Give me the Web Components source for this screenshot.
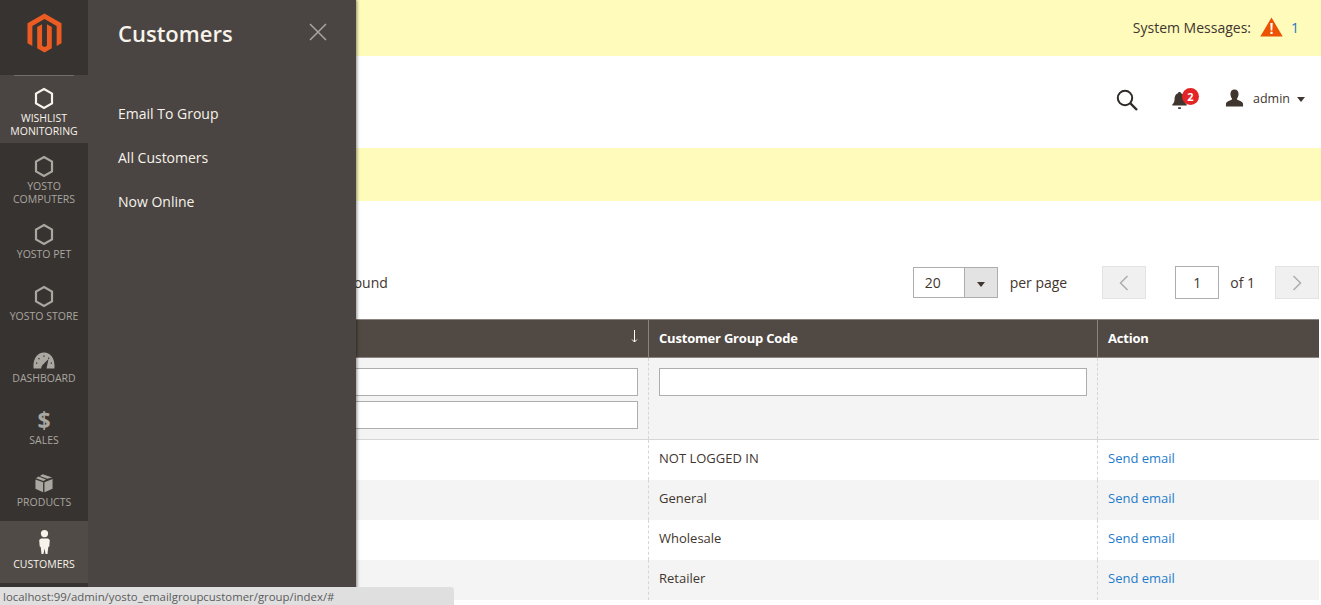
<!DOCTYPE html>
<html>
<head>
<meta charset="utf-8">
<title>Customer Groups</title>
<style>
html, body { margin: 0; padding: 0; height: 100%; overflow: hidden; background: #fff; }
body { font-family: "Open Sans", "Noto Sans", sans-serif; font-size: 14px; color: #41362f; }
</style>
</head>
<body>
<admin-app></admin-app>

<script>
const HEX = `<svg width="20" height="23" viewBox="0 0 20 23"><path d="M10 2 18 6.600V16.400L10 21 2 16.400V6.600Z" fill="none" stroke="currentColor" stroke-width="2.200"/></svg>`;
const ICONS = {
    hex: HEX,
    dashboard: `<svg style="margin-top:3px" width="22" height="17" viewBox="0 0 22 17"><path fill="currentColor" d="M.6 16.500C-.3 7 4 .5 11 .5s11.300 6.500 10.400 16H13.500L15.500 7 9.500 13C8.700 14 8 15.300 8.300 16.500Z"/><path fill="#373330" d="M3 10.500h1.300v1.300H3zM5.300 6h1.300v1.300H5.300zM10.300 3.500h1.300v1.300h-1.300zM15 5.500h1.300v1.300H15zM17.700 10.500H19v1.300h-1.300z"/></svg>`,
    dollar: `<span style="font:700 23px/25px 'Open Sans',sans-serif">$</span>`,
    box: `<svg width="18" height="20" viewBox="0 0 20 22"><path fill="currentColor" d="M9.300 8.800 1 5.600 4 3.900l8.300 3.200zM13.700 6.400 5.400 3.200 8.500 1.400l10.600 3.500zM.5 7l8.500 3.200v11L.5 17.500zM19.500 6.500v11L10.500 21.300v-11z"/></svg>`,
    person: `<svg style="margin-bottom:6px" width="11" height="24" viewBox="0 0 11 24"><circle cx="5.500" cy="3.600" r="3.600" fill="currentColor"/><path fill="currentColor" d="M2 8.500H9L10.800 10 10.300 16.500 9.300 17 8.500 24H6.500L5.500 18.500 4.500 24H2.500L1.700 17 .7 16.500 .2 10Z"/></svg>`
};

class AdminLogo extends HTMLElement {
    constructor() {
        super();
        this.attachShadow({ mode: 'open' });
        this.shadowRoot.innerHTML = `
            <style>
                :host { display: flex; height: 75px; justify-content: center; padding-top: 13px; box-sizing: border-box; position: relative; }
                :host::after { content: ""; position: absolute; left: 14px; right: 14px; bottom: -1px; height: 1px; background: #736e6a; }
                svg { display: block; margin-left: 1px; }
            </style>
            <svg width="35" height="40" viewBox="0 0 36 41">
                <path fill="#ec5c22" d="M18 .5 35.500 10.500V31l-5 2.900V13.400L18 6.200 5.500 13.400V33.900L.5 31V10.500Z"/>
                <path fill="#ec5c22" d="M15.500 11.500V33.500L18 35 20.500 33.500V11.500L25.500 14.200V36.300L18 40.500 10.500 36.300V14.200Z"/>
            </svg>`;
    }
}

class NavItem extends HTMLElement {
    constructor() {
        super();
        this.attachShadow({ mode: 'open' });
    }

    connectedCallback() {
        const icon = ICONS[this.getAttribute('icon')] || HEX;
        this.shadowRoot.innerHTML = `
            <style>
                :host { display: flex; flex-direction: column; align-items: center; box-sizing: border-box; height: 62px; padding-top: 11px; color: #aaa6a0; }
                :host([active]) { background: #504b47; color: #f7f3eb; }
                :host([first]) { background: #4a4542; }
                :host([wide]) { height: 68px; }
                .icon { height: 25px; display: flex; align-items: center; justify-content: center; margin-bottom: 1px; }
                svg { display: block; }
                .label { font-size: 10.500px; line-height: 13px; text-align: center; text-transform: uppercase; white-space: pre-line; }
            </style>
            <div class="icon">${icon}</div>
            <div class="label"><slot></slot></div>`;
    }
}

class AdminSidebar extends HTMLElement {
    constructor() {
        super();
        this.attachShadow({ mode: 'open' });
        this.shadowRoot.innerHTML = `
            <style>
                :host { display: block; position: absolute; left: 0; top: 0; bottom: 0; width: 88px; background: #373330; z-index: 3; }
            </style>
            <slot></slot>`;
    }
}

class FlyoutPanel extends HTMLElement {
    constructor() {
        super();
        this.attachShadow({ mode: 'open' });
        this.shadowRoot.innerHTML = `
            <style>
                :host { display: block; position: absolute; left: 88px; top: 0; bottom: 0; width: 268px; box-sizing: border-box; padding: 18px 30px 0; background: #4a4542; box-shadow: 1px 0 3px rgba(0,0,0,.45); z-index: 2; color: #f7f3eb; }
                header { display: flex; justify-content: space-between; align-items: center; margin-bottom: 55px; }
                h2 { margin: 0; font-size: 22px; line-height: 30px; font-weight: 600; color: #f7f3eb; }
                svg { display: block; margin: -3px -2px 0 0; }
                .links { display: flex; flex-direction: column; gap: 22px; }
                ::slotted(a) { font-size: 14px; line-height: 22px; color: #f7f3eb; text-decoration: none; }
            </style>
            <header>
                <h2>${this.getAttribute('heading')}</h2>
                <svg width="20" height="20" viewBox="0 0 20 20"><path d="M2 2 18 18M18 2 2 18" stroke="#aaa6a0" stroke-width="1.500"/></svg>
            </header>
            <div class="links"><slot></slot></div>`;
    }
}

class MessageBar extends HTMLElement {
    constructor() {
        super();
        this.attachShadow({ mode: 'open' });
        this.shadowRoot.innerHTML = `
            <style>
                :host { display: flex; align-items: center; justify-content: flex-end; box-sizing: border-box; height: 56px; background: #fffbbb; padding: 0 22px 2px 0; color: #41362f; }
                :host([plain]) { height: 53px; }
            </style>
            <slot></slot>`;
    }
}

class SystemStatus extends HTMLElement {
    constructor() {
        super();
        this.attachShadow({ mode: 'open' });
        this.shadowRoot.innerHTML = `
            <style>
                :host { display: flex; align-items: center; font-size: 14px; }
                .title { margin-right: 9px; }
                svg { display: block; margin-right: 8px; }
                .count { color: #1979c3; }
            </style>
            <span class="title">System Messages:</span>
            <svg width="23" height="20" viewBox="0 0 23 20"><path d="M11.500 .5 22.700 19.500H.3Z" fill="#eb5202"/><path d="M10.300 6h2.400l-.4 7.500h-1.600zM10.400 14.800h2.200v2.300h-2.200z" fill="#fff"/></svg>
            <span class="count">1</span>`;
    }
}

class AdminHeader extends HTMLElement {
    constructor() {
        super();
        this.attachShadow({ mode: 'open' });
        this.shadowRoot.innerHTML = `
            <style>
                :host { display: flex; align-items: center; justify-content: flex-end; box-sizing: border-box; height: 92px; padding: 0 16px 6px 0; color: #41362f; }
                .search { margin: 1px 33px 0 0; display: block; }
                .bell { position: relative; margin-right: 25px; width: 29px; height: 24px; }
                .bell svg { position: absolute; left: 1px; top: 5px; }
                .badge { position: absolute; left: 11px; top: 1px; width: 17px; height: 17px; border-radius: 50%; background: #e22626; color: #fff; font-size: 11px; font-weight: 700; line-height: 17px; text-align: center; }
                .user { display: block; margin: -2px 9px 0 0; }
                .name { font-size: 12.500px; margin: -2px 7px 0 0; }
                .caret { width: 0; height: 0; border: 4px solid transparent; border-top: 5px solid #41362f; border-bottom: 0; }
            </style>
            <svg class="search" width="22" height="22" viewBox="0 0 22 22"><circle cx="9" cy="9" r="7.200" fill="none" stroke="#2f2a27" stroke-width="2"/><path d="M14.200 14.200 21 21" stroke="#2f2a27" stroke-width="2.400"/></svg>
            <div class="bell">
                <svg width="15" height="18" viewBox="0 0 16 20"><path fill="#41362f" d="M8 0c1 0 1.600.6 1.600 1.500C12.500 2.300 13.500 5 13.500 8c0 3 1 4.500 2.500 6v1H0v-1c1.500-1.500 2.500-3 2.500-6 0-3 1-5.700 3.900-6.500C6.400.6 7 0 8 0zM6.500 17h3V19h-3z"/></svg>
                <span class="badge">2</span>
            </div>
            <svg class="user" width="19" height="18" viewBox="0 0 20 20"><path fill="#41362f" d="M10 .5c3 0 4.500 2.200 4.500 5 0 2-.8 3.900-1.700 5l.2 1.500c2.500 1 6 1.800 6.500 4.500V19.500H.5V16.500C1 13.800 4.500 13 7 12l.2-1.500C6.300 9.400 5.500 7.500 5.500 5.500c0-2.800 1.500-5 4.500-5z"/></svg>
            <span class="name">admin</span>
            <span class="caret"></span>`;
    }
}

class GridToolbar extends HTMLElement {
    constructor() {
        super();
        this.attachShadow({ mode: 'open' });
        this.shadowRoot.innerHTML = `
            <style>
                :host { display: flex; align-items: center; box-sizing: border-box; height: 118px; padding: 66px 2px 21px 0; color: #41362f; }
                .found { margin-left: 196px; font-size: 14px; margin-right: auto; }
                .select { display: flex; box-sizing: border-box; width: 85px; height: 31px; border: 1px solid #adadad; margin-right: 12px; }
                .select .val { flex: 1; padding-left: 11px; line-height: 29px; font-size: 14px; }
                .select .btn { width: 33px; box-sizing: border-box; padding: 3px 0 0 1px; background: #e3e3e3; border-left: 1px solid #adadad; display: flex; align-items: center; justify-content: center; }
                .select .btn i { width: 0; height: 0; border: 4px solid transparent; border-top: 5px solid #41362f; border-bottom: 0; }
                .per { margin-right: 35px; font-size: 14px; }
                .pg { box-sizing: border-box; width: 44px; height: 33px; background: #f0f0f0; border: 1px solid #e3e3e3; display: flex; align-items: center; justify-content: center; }
                .num { box-sizing: border-box; width: 44px; height: 33px; border: 1px solid #adadad; margin-left: 29px; margin-right: 11px; text-align: center; line-height: 31px; font-size: 14px; }
                .of { margin-right: 20px; font-size: 14px; }
                svg { display: block; }
            </style>
            <span class="found"><slot></slot></span>
            <div class="select"><span class="val">20</span><span class="btn"><i></i></span></div>
            <span class="per">per page</span>
            <span class="pg"><svg width="10" height="16" viewBox="0 0 10 16"><path d="M8.500 1 1.500 8l7 7" fill="none" stroke="#adadad" stroke-width="1.500"/></svg></span>
            <span class="num">1</span>
            <span class="of">of 1</span>
            <span class="pg"><svg width="10" height="16" viewBox="0 0 10 16"><path d="M1.500 1l7 7-7 7" fill="none" stroke="#adadad" stroke-width="1.500"/></svg></span>`;
    }
}

class GroupGrid extends HTMLElement {
    constructor() {
        super();
        this.attachShadow({ mode: 'open' });
    }

    connectedCallback() {
        const rows = [['0', 'NOT LOGGED IN'], ['1', 'General'], ['2', 'Wholesale'], ['3', 'Retailer']];
        const body = rows.map(r => `
            <div class="row">
                <div class="cell">${r[0]}</div>
                <div class="cell">${r[1]}</div>
                <div class="cell"><a href="#">Send email</a></div>
            </div>`).join('');
        this.shadowRoot.innerHTML = `
            <style>
                :host { display: block; margin-right: 2px; font-size: 13px; color: #41362f; }
                .row, .head, .filters { display: grid; grid-template-columns: 560px 449px 1fr; }
                .head { height: 39px; box-sizing: border-box; background: #514943; border: 1px solid #8a837f; border-left: 0; border-right: 0; color: #fff; font-weight: 700; letter-spacing: -.2px; }
                .head div { padding-left: 10px; line-height: 37px; border-left: 1px solid #8a837f; position: relative; }
                .head div:first-child { border-left: 0; }
                .arrow { position: absolute; right: 10px; top: 10px; display: block; }
                .filters { height: 82px; box-sizing: border-box; background: #f4f4f4; border-bottom: 1px solid #d6d6d6; }
                .filters > div { padding: 10px 10px 0; display: flex; flex-direction: column; gap: 5px; border-left: 1px dashed #d6d6d6; }
                .filters > div:first-child { border-left: 0; }
                .filters span { display: block; height: 28px; box-sizing: border-box; background: #fff; border: 1px solid #adadad; }
                .row { height: 40px; }
                .row:nth-child(even) { background: #f4f4f4; }
                .cell { padding-left: 10px; line-height: 37px; border-left: 1px dashed #d6d6d6; }
                .cell:first-child { border-left: 0; }
                a { color: #1f7ccb; text-decoration: none; }
            </style>
            <div class="head">
                <div>ID<svg class="arrow" width="7" height="13" viewBox="0 0 7 13"><path d="M3.500 0V12M1 9.500 3.500 12 6 9.500" fill="none" stroke="#fff" stroke-width="1"/></svg></div>
                <div>Customer Group Code</div>
                <div>Action</div>
            </div>
            <div class="filters">
                <div><span></span><span></span></div>
                <div><span></span></div>
                <div></div>
            </div>
            <div class="rows">${body}</div>`;
    }
}

class StatusTip extends HTMLElement {
    constructor() {
        super();
        this.attachShadow({ mode: 'open' });
        this.shadowRoot.innerHTML = `
            <style>
                :host { position: absolute; left: 0; bottom: 0; width: 454px; height: 18px; box-sizing: border-box; padding-left: 3px; background: #dfdfdf; border-top-right-radius: 3px; font-size: 11.400px; line-height: 20px; color: #5c5c5c; z-index: 4; white-space: nowrap; overflow: hidden; }
            </style>
            <slot></slot>`;
    }
}

class AdminApp extends HTMLElement {
    constructor() {
        super();
        this.attachShadow({ mode: 'open' });
        this.shadowRoot.innerHTML = `
            <style>
                :host { display: block; position: relative; width: 1321px; height: 605px; overflow: hidden; }
                main { margin-left: 88px; }
            </style>
            <admin-sidebar>
                <admin-logo></admin-logo>
                <nav-item icon="hex" active first wide>Wishlist
Monitoring</nav-item>
                <nav-item icon="hex" wide>Yosto
Computers</nav-item>
                <nav-item icon="hex">Yosto Pet</nav-item>
                <nav-item icon="hex">Yosto Store</nav-item>
                <nav-item icon="dashboard">Dashboard</nav-item>
                <nav-item icon="dollar">Sales</nav-item>
                <nav-item icon="box">Products</nav-item>
                <nav-item icon="person" active>Customers</nav-item>
            </admin-sidebar>
            <flyout-panel heading="Customers">
                <a href="#">Email To Group</a>
                <a href="#">All Customers</a>
                <a href="#">Now Online</a>
            </flyout-panel>
            <main>
                <message-bar><system-status></system-status></message-bar>
                <admin-header></admin-header>
                <message-bar plain></message-bar>
                <grid-toolbar>4 records found</grid-toolbar>
                <group-grid></group-grid>
            </main>
            <status-tip>localhost:99/admin/yosto_emailgroupcustomer/group/index/#</status-tip>`;
    }
}

customElements.define('admin-logo', AdminLogo);
customElements.define('nav-item', NavItem);
customElements.define('admin-sidebar', AdminSidebar);
customElements.define('flyout-panel', FlyoutPanel);
customElements.define('message-bar', MessageBar);
customElements.define('system-status', SystemStatus);
customElements.define('admin-header', AdminHeader);
customElements.define('grid-toolbar', GridToolbar);
customElements.define('group-grid', GroupGrid);
customElements.define('status-tip', StatusTip);
customElements.define('admin-app', AdminApp);
</script>
</body>
</html>
